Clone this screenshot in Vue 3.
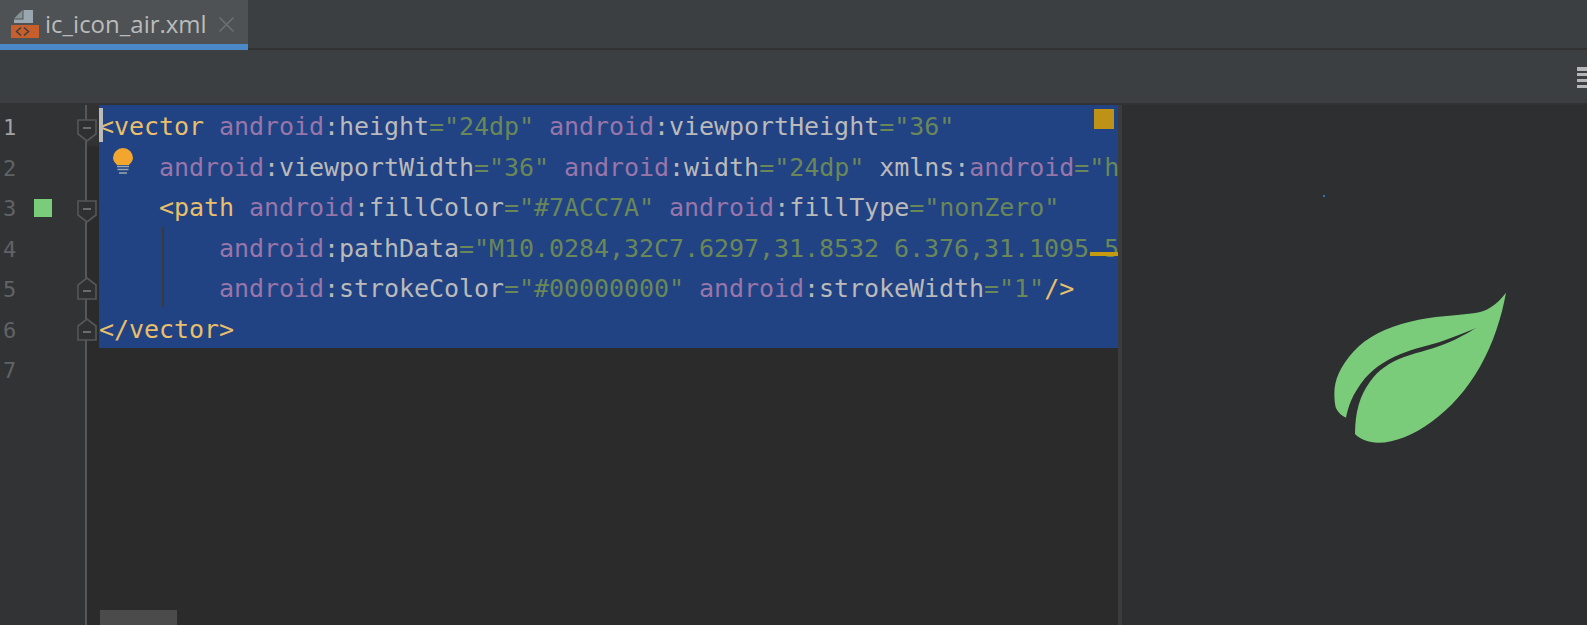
<script setup>
const lines = [
  { n: 1, active: true, fold: 'open', indent: 0, parts: [['t', '<vector'], ['s', ' '], ['a', 'android'], ['k', ':height'], ['v', '="24dp"'], ['s', ' '], ['a', 'android'], ['k', ':viewportHeight'], ['v', '="36"']] },
  { n: 2, indent: 4, parts: [['a', 'android'], ['k', ':viewportWidth'], ['v', '="36"'], ['s', ' '], ['a', 'android'], ['k', ':width'], ['v', '="24dp"'], ['s', ' '], ['k', 'xmlns'], ['k', ':'], ['a', 'android'], ['v', '="h']] },
  { n: 3, mark: true, fold: 'open', indent: 4, parts: [['t', '<path'], ['s', ' '], ['a', 'android'], ['k', ':fillColor'], ['v', '="#7ACC7A"'], ['s', ' '], ['a', 'android'], ['k', ':fillType'], ['v', '="nonZero"']] },
  { n: 4, indent: 8, parts: [['a', 'android'], ['k', ':pathData'], ['v', '="M10.0284,32C7.6297,31.8532 6.376,31.1095 5']] },
  { n: 5, fold: 'close', indent: 8, parts: [['a', 'android'], ['k', ':strokeColor'], ['v', '="#00000000"'], ['s', ' '], ['a', 'android'], ['k', ':strokeWidth'], ['v', '="1"'], ['t', '/>']] },
  { n: 6, fold: 'close', indent: 0, parts: [['t', '</vector>']] },
  { n: 7, indent: 0, parts: [] }
]
</script>

<template>
  <div class="ide">
    <div class="tabbar">
      <div class="tab">
        <svg class="file-icon" width="30" height="30" viewBox="0 0 30 30">
          <path d="M12.500 1H22V14H3V10.500H12.500Z" fill="#9aa7b0" />
          <path d="M3 9.500L11.500 1V9.500Z" fill="#879298" />
          <rect x="0" y="16" width="28" height="13" fill="#c75f2c" />
          <path d="M10 18.500l-4.500 4 4.500 4M13 18.500l4.500 4-4.500 4" fill="none" stroke="#3c3f41" stroke-width="1.500" />
        </svg>
        <span class="tab-name">ic_icon_air.xml</span>
        <svg class="tab-close" width="15" height="15" viewBox="0 0 15 15">
          <path d="M0.500 0.500l14 14M14.500 0.500l-14 14" stroke="#6e7173" stroke-width="1.500" fill="none" />
        </svg>
      </div>
    </div>
    <div class="toolbar">
      <div class="menu-icon"><i></i><i></i><i></i><i></i></div>
    </div>
    <div class="body">
      <div class="gutter">
        <div v-for="l in lines" :key="l.n" class="gutter-row">
          <span class="num" :class="{ on: l.active }">{{ l.n }}</span>
          <span class="mark-slot"><span v-if="l.mark" class="mark"></span></span>
          <svg v-if="l.fold" class="fold" :class="'fold-' + l.fold" width="20" height="24" viewBox="0 0 20 24">
            <path v-if="l.fold === 'open'" d="M1 1h18v14l-9 7-9-7z" fill="#2f3031" stroke="#555759" stroke-width="1.600" />
            <path v-else d="M1 23h18V9l-9-7-9 7z" fill="#2f3031" stroke="#555759" stroke-width="1.600" />
            <path :d="l.fold === 'open' ? 'M6 9h8' : 'M6 15h8'" stroke="#7a7c7e" stroke-width="1.600" />
          </svg>
        </div>
      </div>
      <div class="editor">
        <span class="active-strip"></span>
        <div class="code">
          <div v-for="l in lines" :key="l.n" class="code-row" :class="{ sel: l.n < 7 }">
            <span class="ind">{{ ' '.repeat(l.indent) }}</span><span v-for="(p, i) in l.parts" :key="i" :class="p[0]">{{ p[1] }}</span>
          </div>
        </div>
        <span class="caret"></span>
        <span class="guide"></span>
        <svg class="bulb" width="22" height="28" viewBox="0 0 22 28">
          <path d="M11 0a10 10 0 0 1 10 10c0 3-2.500 5-4 7H5C3.500 15 1 13 1 10A10 10 0 0 1 11 0z" fill="#f2a62d" />
          <path d="M5 18.500h12M5.500 21.500h11M7 25h8" stroke="#9aa7b0" stroke-width="1.600" />
        </svg>
        <span class="sq"></span>
        <span class="under"></span>
        <span class="thumb"></span>
      </div>
      <div class="preview">
        <span class="dot"></span>
        <svg class="leaf" width="210" height="170" viewBox="0 0 630 510">
          <path fill="#7acc7a" d="M588 38C560 75 530 95 490 100C440 107 370 108 300 125C230 142 170 170 130 215C90 260 73 300 73 340C73 360 75 375 78 385C85 398 95 408 108 413C115 380 125 345 165 295C195 260 235 235 290 215C330 200 365 195 400 182C435 170 470 155 500 143C470 160 445 175 410 190C375 205 330 215 280 232C240 247 205 270 180 305C150 345 135 395 135 462C150 478 175 488 205 488C255 488 310 465 365 425C420 385 470 330 510 260C550 190 575 110 588 38Z" />
        </svg>
      </div>
    </div>
  </div>
</template>

<style>
html, body { margin: 0; background: #2b2b2b; overflow: hidden; }
</style>

<style scoped>
.ide { width: 1587px; height: 625px; display: flex; flex-direction: column; background: #2b2b2b; overflow: hidden; }
.tabbar { height: 50px; flex: none; background: #3c3f41; box-shadow: inset 0 -2px 0 #323232; display: flex; }
.tab { width: 248px; box-sizing: border-box; height: 50px; background: #4e5254; border-bottom: 6px solid #4a88c7; display: flex; align-items: center; padding-left: 11px; }
.file-icon { margin-top: 3px; flex: none; }
.tab-name { font-family: "Open Sans", "Noto Sans", sans-serif; font-size: 24px; color: #bbbbbb; margin-left: 4px; margin-top: 2px; white-space: nowrap; }
.tab-close { margin-left: 12px; margin-top: 5px; flex: none; }
.toolbar { height: 53px; flex: none; background: #3c3f41; border-bottom: 2px solid #323232; position: relative; }
.menu-icon { position: absolute; left: 1577px; top: 17px; display: flex; flex-direction: column; gap: 2.300px; }
.menu-icon i { display: block; width: 10px; height: 3.600px; background: #b4b6b8; }
.body { flex: 1; min-height: 0; display: flex; }
.gutter { width: 87px; box-sizing: border-box; flex: none; background: #313335; border-right: 2px solid #555759; position: relative; z-index: 1; }
.gutter-row { height: 40.500px; display: flex; align-items: center; position: relative; }
.num { width: 34px; padding-left: 3px; box-sizing: border-box; font: 22px/1 "DejaVu Sans Mono", monospace; color: #606366; margin-top: 6px; }
.num.on { color: #a4a3a3; }
.mark-slot { width: 18px; display: flex; margin-top: 4px; }
.mark { width: 18px; height: 18px; background: #7acc7a; }
.fold { position: absolute; left: 77px; top: 50%; }
.fold-open { margin-top: -6px; }
.fold-close { margin-top: -11px; }
.editor { width: 1031px; flex: none; background: #2b2b2b; position: relative; padding-left: 12px; box-sizing: border-box; overflow: hidden; }
.active-strip { position: absolute; left: 0; top: 0; width: 12px; height: 40.500px; background: #323232; }
.code { font: 25px/44.500px "DejaVu Sans Mono", monospace; letter-spacing: -0.050px; }
.code-row { height: 40.500px; white-space: pre; overflow: hidden; }
.sel { background: #214283; }
.t { color: #e8bf6a; }
.a { color: #9876aa; }
.k { color: #bababa; }
.v { color: #6a8759; }
.caret { position: absolute; left: 12px; top: 3px; width: 4px; height: 34px; background: #bbbbbb; }
.guide { position: absolute; left: 75px; top: 122px; width: 2px; height: 80px; background: #3a3a3a; }
.bulb { position: absolute; left: 25px; top: 43px; }
.sq { position: absolute; left: 1007px; top: 4px; width: 20px; height: 20px; background: #be9117; }
.under { position: absolute; left: 1003px; top: 147px; width: 28px; height: 4px; background: #c49a10; }
.thumb { position: absolute; left: 13px; top: 505px; width: 77px; height: 15px; background: #4b4b4b; }
.preview { flex: 1; background: #2e2f31; border-left: 4px solid #3b3c3d; position: relative; padding: 175px 0 0 188px; }
.leaf { display: block; }
.dot { position: absolute; left: 201px; top: 90px; width: 2px; height: 2px; background: #2f6fb5; }
</style>
